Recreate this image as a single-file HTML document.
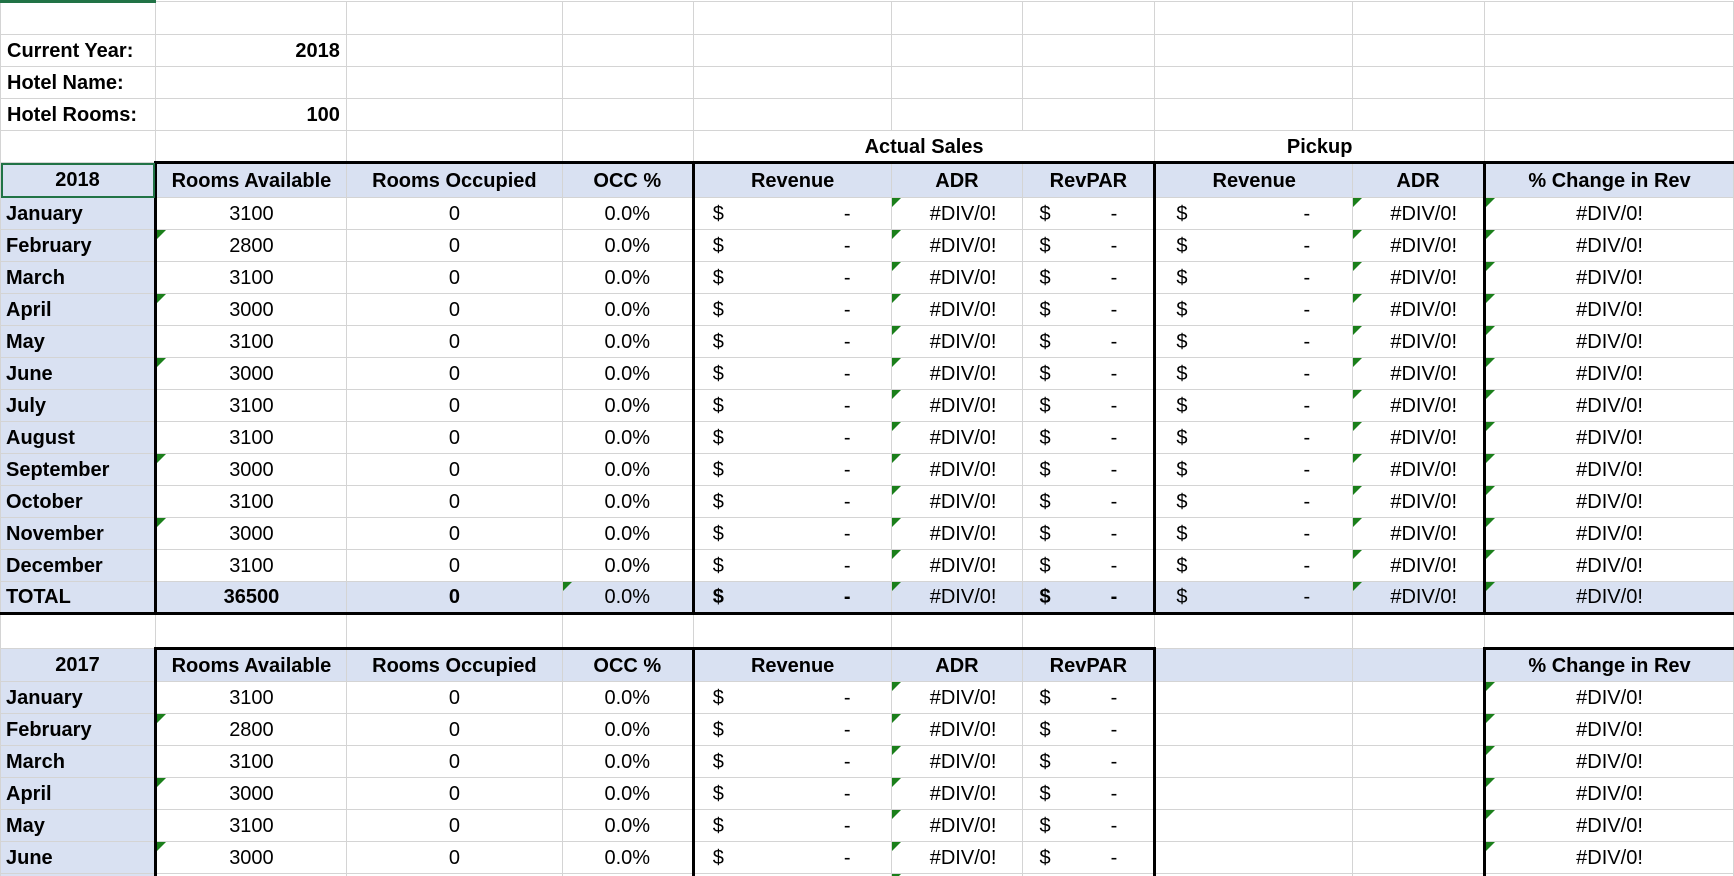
<!DOCTYPE html>
<html><head><meta charset="utf-8"><style>
html,body{margin:0;padding:0;background:#fff;width:1734px;height:876px;overflow:hidden}
table{border-collapse:collapse;table-layout:fixed;font-family:"Liberation Sans",Arial,sans-serif;font-size:20px;color:#000}
td{border:1px solid #d4d4d4;padding:0 6px;white-space:nowrap;overflow:hidden;position:relative;line-height:20px}
.b{font-weight:bold}
.c{text-align:center}
.r{text-align:right}
.h td{background:#d9e1f2;font-weight:bold;text-align:center}
.h td.nb{background:#fff}
.a{background:#d9e1f2;font-weight:bold;text-align:left;padding-left:5px}
.L{border-left:3px solid #000}
.T{border-top:3px solid #000}
.B{border-bottom:3px solid #000}
.tot td{background:#d9e1f2}
.cu{display:flex;justify-content:space-between}
.e{padding:0 34px 0 12px}
.g{padding:0 30px 0 10px}
.hh{padding:0 36px 0 14px}
.adr{text-align:right;padding-right:26px}
.t::before{content:"";position:absolute;left:0;top:0;border-top:9px solid #1a7f1a;border-right:9px solid transparent}
.sel{outline:2px solid #217346;outline-offset:-2px}
</style></head><body>
<table>
<colgroup><col style="width:155px"><col style="width:191px"><col style="width:216px"><col style="width:131px"><col style="width:198px"><col style="width:132px"><col style="width:132px"><col style="width:198px"><col style="width:132px"><col style="width:249px"></colgroup>
<tr style="height:33px"><td style="border-top:3px solid #217346"></td><td></td><td></td><td></td><td></td><td></td><td></td><td></td><td></td><td></td></tr>
<tr style="height:32px"><td class="b">Current Year:</td><td class="b r">2018</td><td></td><td></td><td></td><td></td><td></td><td></td><td></td><td></td></tr>
<tr style="height:32px"><td class="b">Hotel Name:</td><td></td><td></td><td></td><td></td><td></td><td></td><td></td><td></td><td></td></tr>
<tr style="height:32px"><td class="b">Hotel Rooms:</td><td class="b r">100</td><td></td><td></td><td></td><td></td><td></td><td></td><td></td><td></td></tr>
<tr style="height:32px"><td></td><td></td><td></td><td></td><td colspan="3" class="b c" style="vertical-align:bottom;padding-bottom:4px">Actual Sales</td><td colspan="2" class="b c" style="vertical-align:bottom;padding-bottom:4px">Pickup</td><td></td></tr>
<tr class="h" style="height:35px"><td class="sel">2018</td><td class="L T">Rooms Available</td><td class="T">Rooms Occupied</td><td class="T">OCC %</td><td class="L T">Revenue</td><td class="T">ADR</td><td class="T">RevPAR</td><td class="L T">Revenue</td><td class="T">ADR</td><td class="L T">% Change in Rev</td></tr>
<tr style="height:32px"><td class="a">January</td><td class="c L">3100</td><td class="c">0</td><td class="c">0.0%</td><td class="L"><div class="cu e"><span>$</span><span>-</span></div></td><td class="adr t">#DIV/0!</td><td><div class="cu g"><span>$</span><span>-</span></div></td><td class="L"><div class="cu hh"><span>$</span><span>-</span></div></td><td class="adr t">#DIV/0!</td><td class="c L t">#DIV/0!</td></tr>
<tr style="height:32px"><td class="a">February</td><td class="c L t">2800</td><td class="c">0</td><td class="c">0.0%</td><td class="L"><div class="cu e"><span>$</span><span>-</span></div></td><td class="adr t">#DIV/0!</td><td><div class="cu g"><span>$</span><span>-</span></div></td><td class="L"><div class="cu hh"><span>$</span><span>-</span></div></td><td class="adr t">#DIV/0!</td><td class="c L t">#DIV/0!</td></tr>
<tr style="height:32px"><td class="a">March</td><td class="c L">3100</td><td class="c">0</td><td class="c">0.0%</td><td class="L"><div class="cu e"><span>$</span><span>-</span></div></td><td class="adr t">#DIV/0!</td><td><div class="cu g"><span>$</span><span>-</span></div></td><td class="L"><div class="cu hh"><span>$</span><span>-</span></div></td><td class="adr t">#DIV/0!</td><td class="c L t">#DIV/0!</td></tr>
<tr style="height:32px"><td class="a">April</td><td class="c L t">3000</td><td class="c">0</td><td class="c">0.0%</td><td class="L"><div class="cu e"><span>$</span><span>-</span></div></td><td class="adr t">#DIV/0!</td><td><div class="cu g"><span>$</span><span>-</span></div></td><td class="L"><div class="cu hh"><span>$</span><span>-</span></div></td><td class="adr t">#DIV/0!</td><td class="c L t">#DIV/0!</td></tr>
<tr style="height:32px"><td class="a">May</td><td class="c L">3100</td><td class="c">0</td><td class="c">0.0%</td><td class="L"><div class="cu e"><span>$</span><span>-</span></div></td><td class="adr t">#DIV/0!</td><td><div class="cu g"><span>$</span><span>-</span></div></td><td class="L"><div class="cu hh"><span>$</span><span>-</span></div></td><td class="adr t">#DIV/0!</td><td class="c L t">#DIV/0!</td></tr>
<tr style="height:32px"><td class="a">June</td><td class="c L t">3000</td><td class="c">0</td><td class="c">0.0%</td><td class="L"><div class="cu e"><span>$</span><span>-</span></div></td><td class="adr t">#DIV/0!</td><td><div class="cu g"><span>$</span><span>-</span></div></td><td class="L"><div class="cu hh"><span>$</span><span>-</span></div></td><td class="adr t">#DIV/0!</td><td class="c L t">#DIV/0!</td></tr>
<tr style="height:32px"><td class="a">July</td><td class="c L">3100</td><td class="c">0</td><td class="c">0.0%</td><td class="L"><div class="cu e"><span>$</span><span>-</span></div></td><td class="adr t">#DIV/0!</td><td><div class="cu g"><span>$</span><span>-</span></div></td><td class="L"><div class="cu hh"><span>$</span><span>-</span></div></td><td class="adr t">#DIV/0!</td><td class="c L t">#DIV/0!</td></tr>
<tr style="height:32px"><td class="a">August</td><td class="c L">3100</td><td class="c">0</td><td class="c">0.0%</td><td class="L"><div class="cu e"><span>$</span><span>-</span></div></td><td class="adr t">#DIV/0!</td><td><div class="cu g"><span>$</span><span>-</span></div></td><td class="L"><div class="cu hh"><span>$</span><span>-</span></div></td><td class="adr t">#DIV/0!</td><td class="c L t">#DIV/0!</td></tr>
<tr style="height:32px"><td class="a">September</td><td class="c L t">3000</td><td class="c">0</td><td class="c">0.0%</td><td class="L"><div class="cu e"><span>$</span><span>-</span></div></td><td class="adr t">#DIV/0!</td><td><div class="cu g"><span>$</span><span>-</span></div></td><td class="L"><div class="cu hh"><span>$</span><span>-</span></div></td><td class="adr t">#DIV/0!</td><td class="c L t">#DIV/0!</td></tr>
<tr style="height:32px"><td class="a">October</td><td class="c L">3100</td><td class="c">0</td><td class="c">0.0%</td><td class="L"><div class="cu e"><span>$</span><span>-</span></div></td><td class="adr t">#DIV/0!</td><td><div class="cu g"><span>$</span><span>-</span></div></td><td class="L"><div class="cu hh"><span>$</span><span>-</span></div></td><td class="adr t">#DIV/0!</td><td class="c L t">#DIV/0!</td></tr>
<tr style="height:32px"><td class="a">November</td><td class="c L t">3000</td><td class="c">0</td><td class="c">0.0%</td><td class="L"><div class="cu e"><span>$</span><span>-</span></div></td><td class="adr t">#DIV/0!</td><td><div class="cu g"><span>$</span><span>-</span></div></td><td class="L"><div class="cu hh"><span>$</span><span>-</span></div></td><td class="adr t">#DIV/0!</td><td class="c L t">#DIV/0!</td></tr>
<tr style="height:32px"><td class="a">December</td><td class="c L">3100</td><td class="c">0</td><td class="c">0.0%</td><td class="L"><div class="cu e"><span>$</span><span>-</span></div></td><td class="adr t">#DIV/0!</td><td><div class="cu g"><span>$</span><span>-</span></div></td><td class="L"><div class="cu hh"><span>$</span><span>-</span></div></td><td class="adr t">#DIV/0!</td><td class="c L t">#DIV/0!</td></tr>
<tr class="tot" style="height:32px"><td class="a B">TOTAL</td><td class="c L B b">36500</td><td class="c B b">0</td><td class="c B t">0.0%</td><td class="L B"><div class="cu e b"><span>$</span><span>-</span></div></td><td class="adr t B">#DIV/0!</td><td class="B"><div class="cu g b"><span>$</span><span>-</span></div></td><td class="L B"><div class="cu hh"><span>$</span><span>-</span></div></td><td class="adr t B">#DIV/0!</td><td class="c L t B">#DIV/0!</td></tr>
<tr style="height:35px"><td></td><td></td><td></td><td></td><td></td><td></td><td></td><td></td><td></td><td></td></tr>
<tr class="h" style="height:33px"><td>2017</td><td class="L T">Rooms Available</td><td class="T">Rooms Occupied</td><td class="T">OCC %</td><td class="L T">Revenue</td><td class="T">ADR</td><td class="T">RevPAR</td><td class="L"></td><td></td><td class="L T">% Change in Rev</td></tr>
<tr style="height:32px"><td class="a">January</td><td class="c L">3100</td><td class="c">0</td><td class="c">0.0%</td><td class="L"><div class="cu e"><span>$</span><span>-</span></div></td><td class="adr t">#DIV/0!</td><td><div class="cu g"><span>$</span><span>-</span></div></td><td class="L"></td><td></td><td class="c L t">#DIV/0!</td></tr>
<tr style="height:32px"><td class="a">February</td><td class="c L t">2800</td><td class="c">0</td><td class="c">0.0%</td><td class="L"><div class="cu e"><span>$</span><span>-</span></div></td><td class="adr t">#DIV/0!</td><td><div class="cu g"><span>$</span><span>-</span></div></td><td class="L"></td><td></td><td class="c L t">#DIV/0!</td></tr>
<tr style="height:32px"><td class="a">March</td><td class="c L">3100</td><td class="c">0</td><td class="c">0.0%</td><td class="L"><div class="cu e"><span>$</span><span>-</span></div></td><td class="adr t">#DIV/0!</td><td><div class="cu g"><span>$</span><span>-</span></div></td><td class="L"></td><td></td><td class="c L t">#DIV/0!</td></tr>
<tr style="height:32px"><td class="a">April</td><td class="c L t">3000</td><td class="c">0</td><td class="c">0.0%</td><td class="L"><div class="cu e"><span>$</span><span>-</span></div></td><td class="adr t">#DIV/0!</td><td><div class="cu g"><span>$</span><span>-</span></div></td><td class="L"></td><td></td><td class="c L t">#DIV/0!</td></tr>
<tr style="height:32px"><td class="a">May</td><td class="c L">3100</td><td class="c">0</td><td class="c">0.0%</td><td class="L"><div class="cu e"><span>$</span><span>-</span></div></td><td class="adr t">#DIV/0!</td><td><div class="cu g"><span>$</span><span>-</span></div></td><td class="L"></td><td></td><td class="c L t">#DIV/0!</td></tr>
<tr style="height:32px"><td class="a">June</td><td class="c L t">3000</td><td class="c">0</td><td class="c">0.0%</td><td class="L"><div class="cu e"><span>$</span><span>-</span></div></td><td class="adr t">#DIV/0!</td><td><div class="cu g"><span>$</span><span>-</span></div></td><td class="L"></td><td></td><td class="c L t">#DIV/0!</td></tr>
<tr style="height:32px"><td class="a"></td><td class="c L"></td><td></td><td></td><td class="L"></td><td class="t"></td><td></td><td class="L"></td><td></td><td class="L"></td></tr>
</table>
</body></html>
